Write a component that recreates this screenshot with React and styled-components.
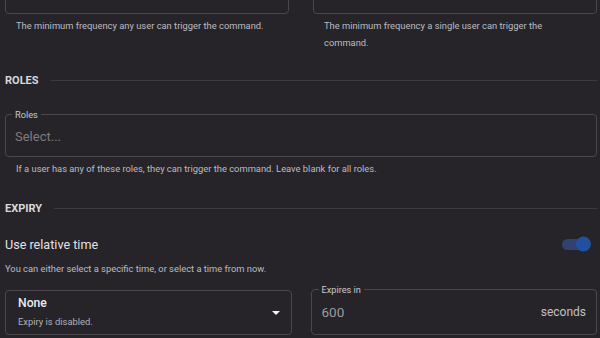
import React from "react";
import styled, { createGlobalStyle } from "styled-components";

const Global = createGlobalStyle`
  html, body { margin: 0; padding: 0; background: #262428; overflow: hidden; }
  body { font-family: Roboto, "Noto Sans", sans-serif; color: #d6d5d8; }
  * { box-sizing: border-box; }
`;

const Page = styled.div`
  width: 600px;
  height: 338px;
  overflow: hidden;
  padding: 0 3px 0 5px;
  display: flex;
  flex-direction: column;
`;

const Content = styled.div`
  margin-top: -30px;
  display: flex;
  flex-direction: column;
`;

const Row = styled.div`
  display: grid;
  grid-template-columns: 1fr 1fr;
  column-gap: ${(p) => p.$gap}px;
  align-items: start;
  margin-top: ${(p) => p.$mt || 0}px;
`;

const Block = styled.div`
  margin-top: ${(p) => p.$mt || 0}px;
`;

const Field = styled.fieldset`
  margin: ${(p) => p.$mt || 0}px 0 0;
  padding: 0 ${(p) => p.$padX || 9}px;
  height: ${(p) => p.$h || 44}px;
  border: 1px solid #4a484d;
  border-radius: 4px;
  display: flex;
  align-items: center;
  justify-content: space-between;
  min-width: 0;
`;

const Legend = styled.legend`
  font-size: 9.2px;
  line-height: 9px;
  color: #c9c8cc;
  padding: 0 3px;
  margin-left: ${(p) => p.$ml ?? -3}px;
`;

const Helper = styled.div`
  font-size: 9.35px;
  line-height: 17px;
  color: #bdbcc0;
  padding: ${(p) => p.$pad || "3px 11px 0"};
`;

const SectionHead = styled.div`
  display: flex;
  align-items: center;
  gap: 12px;
  margin-top: ${(p) => p.$mt}px;
  height: 14px;
  font-size: 11px;
  font-weight: 700;
  color: #d9d8dc;
  &::after {
    content: "";
    flex: 1;
    height: 1px;
    background: #3d3b40;
  }
`;

const Placeholder = styled.span`
  font-size: 13px;
  color: #7d7c80;
  margin-top: -3px;
`;

const ToggleRow = styled.div`
  display: flex;
  align-items: center;
  justify-content: space-between;
  margin-top: 20px;
  height: 18px;
  padding-right: 7px;
`;

const ToggleLabel = styled.span`
  font-size: 12.6px;
  color: #e2e1e5;
`;

const Track = styled.div`
  position: relative;
  width: 28px;
  height: 11px;
  border-radius: 6px;
  background: #2f4270;
`;

const Thumb = styled.div`
  position: absolute;
  right: -1px;
  top: 50%;
  transform: translateY(-50%);
  width: 15px;
  height: 15px;
  border-radius: 50%;
  background: #22509e;
`;

const SelectBox = styled.div`
  height: 45px;
  border: 1px solid #4a484d;
  border-radius: 4px;
  padding: 0 10px 0 12px;
  display: flex;
  align-items: center;
  justify-content: space-between;
`;

const SelectText = styled.div`
  display: flex;
  flex-direction: column;
  gap: 4px;
  margin-top: -2px;
`;

const SelectTitle = styled.span`
  font-size: 12.2px;
  font-weight: 500;
  color: #ebeaee;
  line-height: 16px;
`;

const SelectSub = styled.span`
  font-size: 9.4px;
  color: #b3b2b6;
  line-height: 14px;
`;

const Caret = styled.span`
  width: 0;
  height: 0;
  border-left: 4px solid transparent;
  border-right: 4px solid transparent;
  border-top: 4px solid #f2f2f2;
  margin-top: 1px;
  margin-right: 1px;
`;

const Value = styled.span`
  font-size: 13.5px;
  color: #9d9ca0;
  margin-top: -5px;
`;

const Unit = styled.span`
  font-size: 12px;
  color: #c2c1c5;
  margin-top: -5px;
`;

export default function App() {
  return (
    <>
      <Global />
      <Page>
        <Content>
          <Row $gap={24}>
            <div>
              <Field />
              <Helper>The minimum frequency any user can trigger the command.</Helper>
            </div>
            <div>
              <Field />
              <Helper $pad="3px 26px 0 11px">
                The minimum frequency a single user can trigger the command.
              </Helper>
            </div>
          </Row>
          <SectionHead $mt={22}>ROLES</SectionHead>
          <Block $mt={23}>
            <Field $h={47}>
              <Legend>Roles</Legend>
              <Placeholder>Select...</Placeholder>
            </Field>
          </Block>
          <Helper $pad="3px 11px 0">
            If a user has any of these roles, they can trigger the command. Leave blank for all roles.
          </Helper>
          <SectionHead $mt={24}>EXPIRY</SectionHead>
          <ToggleRow>
            <ToggleLabel>Use relative time</ToggleLabel>
            <Track>
              <Thumb />
            </Track>
          </ToggleRow>
          <Helper $pad="7px 0 0">You can either select a specific time, or select a time from now.</Helper>
          <Row $gap={19} $mt={13}>
            <SelectBox>
              <SelectText>
                <SelectTitle>None</SelectTitle>
                <SelectSub>Expiry is disabled.</SelectSub>
              </SelectText>
              <Caret />
            </SelectBox>
            <Field $h={50} $padX={10} $mt={-5}>
              <Legend>Expires in</Legend>
              <Value>600</Value>
              <Unit>seconds</Unit>
            </Field>
          </Row>
        </Content>
      </Page>
    </>
  );
}
